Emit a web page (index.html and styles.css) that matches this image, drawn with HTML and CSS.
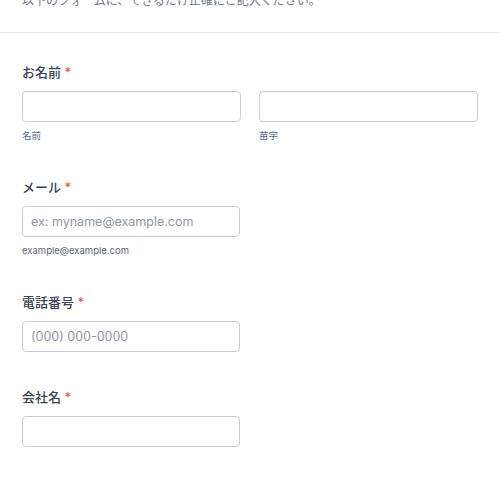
FILE: index.html
```html
<!DOCTYPE html>
<html lang="ja">
<head>
<meta charset="UTF-8">
<meta name="viewport" content="width=device-width, initial-scale=1.0">
<title>お問い合わせフォーム</title>
<link rel="stylesheet" href="styles.css">
</head>
<body>

<div class="form-header">
  <p class="form-desc">以下のフォームに、できるだけ正確にご記入ください。</p>
</div>

<form class="form-body">
  <div class="field">
    <label class="field-label">お名前 <span class="req">*</span></label>
    <div class="row two">
      <div class="col">
        <input type="text" class="text-input">
        <span class="sublabel">名前</span>
      </div>
      <div class="col">
        <input type="text" class="text-input">
        <span class="sublabel">苗字</span>
      </div>
    </div>
  </div>

  <div class="field">
    <label class="field-label">メール <span class="req">*</span></label>
    <div class="row">
      <div class="col">
        <input type="email" class="text-input" placeholder="ex: myname@example.com">
        <span class="sublabel">example@example.com</span>
      </div>
    </div>
  </div>

  <div class="field">
    <label class="field-label">電話番号 <span class="req">*</span></label>
    <div class="row">
      <div class="col">
        <input type="tel" class="text-input" placeholder="(000) 000-0000">
      </div>
    </div>
  </div>

  <div class="field">
    <label class="field-label">会社名 <span class="req">*</span></label>
    <div class="row">
      <div class="col">
        <input type="text" class="text-input">
      </div>
    </div>
  </div>
</form>

</body>
</html>
```

FILE: styles.css
```css
* {
    box-sizing: border-box;
}
body {
    margin: 0;
    font-family: Inter, 'Noto Sans CJK JP', sans-serif;
    background-color: #fff;
    color: #2c3345;
}
.form-header {
    margin-top: -9px;
    padding: 0 22px 21px;
    border-bottom: 1px solid #e6e8ee;
}
.form-desc {
    margin: 0;
    font-size: 12px;
    line-height: 20px;
    color: #6f7890;
}
.form-body {
    padding: 29px 22px 0;
}
.field {
    margin-bottom: 35px;
}
.field-label {
    display: block;
    font-size: 13px;
    font-weight: 500;
    line-height: 20px;
    color: #3a4256;
    margin-bottom: 9px;
}
.req {
    color: #f0545a;
}
.row {
    display: grid;
    grid-template-columns: 218px;
    column-gap: 18px;
}
.row.two {
    grid-template-columns: 1fr 1fr;
}
.col {
    display: flex;
    flex-direction: column;
}
.text-input {
    height: 31px;
    width: 100%;
    padding: 0 8px;
    border: 1px solid #c8ccd8;
    border-radius: 4px;
    font-family: inherit;
    font-size: 12.5px;
    color: #2c3345;
    background: #fff;
}
.text-input::placeholder {
    color: #8f96a8;
}
.sublabel {
    margin-top: 8px;
    font-size: 9.5px;
    line-height: 12px;
    color: #57647e;
}
```
